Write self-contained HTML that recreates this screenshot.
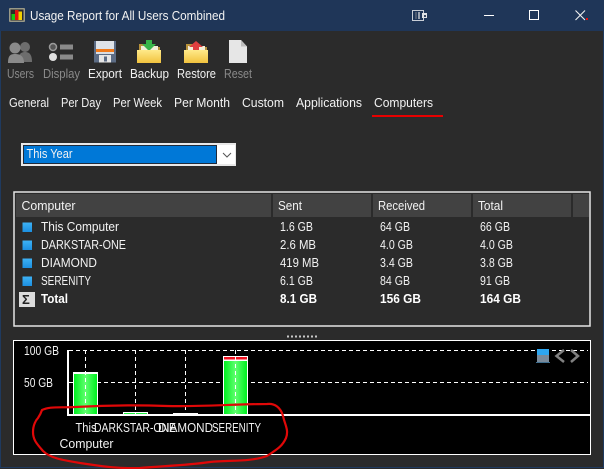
<!DOCTYPE html>
<html>
<head>
<meta charset="utf-8">
<style>
html,body{margin:0;padding:0;background:#2b2b2b;width:604px;height:469px;overflow:hidden}
svg{display:block}
text{font-family:"Liberation Sans",sans-serif;font-size:13px;fill:#f2f2f2}
.g{fill:#8a8a8a}
.b{font-weight:bold;fill:#fff}
</style>
</head>
<body>
<svg width="604" height="469" viewBox="0 0 604 469" xmlns="http://www.w3.org/2000/svg">
<defs>
<linearGradient id="gr" x1="0" x2="1" y1="0" y2="0">
<stop offset="0" stop-color="#00f020"/><stop offset=".5" stop-color="#60ff70"/><stop offset="1" stop-color="#00f020"/>
</linearGradient>
<linearGradient id="fo" x1="0" x2="0" y1="0" y2="1">
<stop offset="0" stop-color="#ffe98a"/><stop offset="1" stop-color="#f2c23e"/>
</linearGradient>
<linearGradient id="bl" x1="0" x2="0" y1="0" y2="1">
<stop offset="0" stop-color="#3db2f5"/><stop offset="1" stop-color="#1c8fe0"/>
</linearGradient>
</defs>

<!-- window -->
<rect width="604" height="469" fill="#2b2b2b"/>
<rect x="0" y="0" width="1" height="468" fill="#1f3a5f"/>
<rect x="603" y="0" width="1" height="468" fill="#1f3a5f"/>
<rect x="0" y="467" width="604" height="1" fill="#1f3a5f"/>
<rect x="0" y="0" width="604" height="31" fill="#1f3658"/>

<!-- app icon -->
<rect x="9" y="8" width="16" height="14" rx="1" fill="#9a9a88"/>
<rect x="10.500" y="9.500" width="13" height="11" fill="#2a2a2a"/>
<rect x="11.500" y="14" width="3.500" height="6" fill="#14c814"/>
<rect x="15" y="10" width="3.500" height="10" fill="#e01010"/>
<rect x="18.500" y="11.500" width="3.500" height="8.500" fill="#f0d000"/>
<text x="30" y="20" textLength="195" lengthAdjust="spacingAndGlyphs">Usage Report for All Users Combined</text>

<!-- caption buttons -->
<rect x="412.500" y="10.500" width="11" height="10" fill="none" stroke="#c9ced6"/>
<rect x="418" y="12" width="2" height="7" fill="#9aa3b0"/>
<rect x="415" y="12" width="2" height="7" fill="#4d5b70"/>
<rect x="422" y="13" width="5" height="5" fill="#dfe2e6"/>
<rect x="424" y="15" width="2" height="2" fill="#39475e"/>
<rect x="484" y="15" width="10" height="1" fill="#fff"/>
<rect x="529.500" y="10.500" width="9" height="9" fill="none" stroke="#fff"/>
<path d="M575.500 10.500 L585 20 M585 10.500 L575.500 20" stroke="#f0f0f0" stroke-width="1.100" fill="none"/>
<rect x="586" y="18" width="2" height="2" fill="#e01010"/>

<!-- Users icon -->
<circle cx="25" cy="47" r="5" fill="#6d6d6d"/>
<path d="M18 62 C18 54 21 52 25 52 C29 52 32 54 32 62 Z" fill="#6d6d6d"/>
<circle cx="15" cy="48" r="5.500" fill="#8a8a8a"/>
<path d="M8 63 C8 56 10 54 15 54 C20 54 24 56 24 63 Z" fill="#8a8a8a"/>

<!-- Display icon -->
<circle cx="53" cy="47" r="3.500" fill="#555" stroke="#9a9a9a" stroke-width="1.500"/>
<circle cx="53" cy="57" r="4" fill="#e0e0e0"/>
<rect x="60" y="44.500" width="13" height="5" fill="#8a8a8a"/>
<rect x="60" y="54.500" width="13" height="5" fill="#8a8a8a"/>

<!-- Export icon -->
<path d="M94 41 H116 V62.500 H94 Z" fill="#5c6c85"/>
<rect x="96" y="41" width="18" height="8" fill="#dfe3e8"/>
<rect x="96" y="49" width="18" height="3" fill="#f07a1a"/>
<rect x="96" y="52" width="18" height="2" fill="#d9dde2"/>
<rect x="99" y="55" width="12" height="7.500" fill="#e6e6e6"/>
<rect x="104" y="56.500" width="3" height="5" fill="#5c6c85"/>

<!-- Backup icon -->
<path d="M139 44 H146 V47 H160 V52 H139 Z" fill="#b8923a"/>
<rect x="141" y="46" width="17" height="6" fill="#f3efd8"/>
<path d="M146 40 H152 V44 H156 L149 51 L142 44 H146 Z" fill="#39b54a"/>
<path d="M137 50 H161 V63 H137 Z" fill="url(#fo)"/>

<!-- Restore icon -->
<path d="M186 44 H193 V47 H207 V52 H186 Z" fill="#b8923a"/>
<rect x="188" y="46" width="17" height="6" fill="#f3efd8"/>
<path d="M196 41 L203 47 H199 V51 H193 V47 H189 Z" fill="#e04040"/>
<path d="M184 50 H208 V63 H184 Z" fill="url(#fo)"/>

<!-- Reset icon -->
<path d="M229 40 H241 L247 46.500 V63 H229 Z" fill="#e6e6e6"/>
<path d="M241 40 V46.500 H247 Z" fill="#bdbdbd"/>

<!-- Toolbar labels -->
<text class="g" x="7" y="78" textLength="27" lengthAdjust="spacingAndGlyphs">Users</text>
<text class="g" x="43" y="78" textLength="37" lengthAdjust="spacingAndGlyphs">Display</text>
<text x="88" y="78" textLength="34" lengthAdjust="spacingAndGlyphs">Export</text>
<text x="130" y="78" textLength="39" lengthAdjust="spacingAndGlyphs">Backup</text>
<text x="177" y="78" textLength="39" lengthAdjust="spacingAndGlyphs">Restore</text>
<text class="g" x="224" y="78" textLength="28" lengthAdjust="spacingAndGlyphs">Reset</text>

<!-- Tabs -->
<text x="9" y="107" textLength="40" lengthAdjust="spacingAndGlyphs">General</text>
<text x="61" y="107" textLength="40" lengthAdjust="spacingAndGlyphs">Per Day</text>
<text x="113" y="107" textLength="49" lengthAdjust="spacingAndGlyphs">Per Week</text>
<text x="174" y="107" textLength="56" lengthAdjust="spacingAndGlyphs">Per Month</text>
<text x="242" y="107" textLength="42" lengthAdjust="spacingAndGlyphs">Custom</text>
<text x="296" y="107" textLength="66" lengthAdjust="spacingAndGlyphs">Applications</text>
<text x="374" y="107" textLength="59" lengthAdjust="spacingAndGlyphs">Computers</text>
<rect x="372" y="115" width="71" height="2" fill="#e80000"/>

<!-- Combo -->
<rect x="21" y="143" width="215" height="23" fill="#e8e8e8"/>
<rect x="23" y="145" width="194" height="19" fill="#1f2a3a"/>
<rect x="24" y="146" width="192" height="17" fill="#0078d7"/>
<rect x="217" y="145" width="18" height="19" fill="#fff"/>
<path d="M223 153 L227 157 L231 153" stroke="#555" stroke-width="1" fill="none"/>
<text x="26.500" y="158" textLength="46" lengthAdjust="spacingAndGlyphs">This Year</text>

<!-- Table -->
<rect x="14" y="192" width="576" height="134" fill="#2b2b2b" stroke="#e4e4e4" stroke-width="1.500"/>
<rect x="16" y="194" width="255" height="23" fill="#424242"/>
<rect x="273" y="194" width="98" height="23" fill="#424242"/>
<rect x="373" y="194" width="98" height="23" fill="#424242"/>
<rect x="473" y="194" width="98" height="23" fill="#424242"/>
<rect x="573" y="194" width="16" height="23" fill="#424242"/>
<text x="21.500" y="210" textLength="54" lengthAdjust="spacingAndGlyphs">Computer</text>
<text x="278" y="210" textLength="24" lengthAdjust="spacingAndGlyphs">Sent</text>
<text x="378" y="210" textLength="47" lengthAdjust="spacingAndGlyphs">Received</text>
<text x="478" y="210" textLength="25" lengthAdjust="spacingAndGlyphs">Total</text>

<rect x="22.500" y="222.500" width="9.500" height="9.500" fill="url(#bl)"/>
<rect x="22.500" y="240.500" width="9.500" height="9.500" fill="url(#bl)"/>
<rect x="22.500" y="258.500" width="9.500" height="9.500" fill="url(#bl)"/>
<rect x="22.500" y="276.500" width="9.500" height="9.500" fill="url(#bl)"/>
<rect x="19" y="292" width="16" height="15" fill="#dcdcdc"/>
<text x="22" y="304" style="font-size:13px;font-weight:bold;fill:#222">Σ</text>

<text x="41" y="231" textLength="78" lengthAdjust="spacingAndGlyphs">This Computer</text>
<text x="41" y="249" textLength="85" lengthAdjust="spacingAndGlyphs">DARKSTAR-ONE</text>
<text x="41" y="267" textLength="56" lengthAdjust="spacingAndGlyphs">DIAMOND</text>
<text x="41" y="285" textLength="50" lengthAdjust="spacingAndGlyphs">SERENITY</text>
<text class="b" x="41" y="303" textLength="27" lengthAdjust="spacingAndGlyphs">Total</text>

<text x="280" y="231" textLength="33" lengthAdjust="spacingAndGlyphs">1.6 GB</text>
<text x="280" y="249" textLength="36" lengthAdjust="spacingAndGlyphs">2.6 MB</text>
<text x="280" y="267" textLength="39" lengthAdjust="spacingAndGlyphs">419 MB</text>
<text x="280" y="285" textLength="33" lengthAdjust="spacingAndGlyphs">6.1 GB</text>
<text class="b" x="280" y="303" textLength="37" lengthAdjust="spacingAndGlyphs">8.1 GB</text>

<text x="380" y="231" textLength="30" lengthAdjust="spacingAndGlyphs">64 GB</text>
<text x="380" y="249" textLength="33" lengthAdjust="spacingAndGlyphs">4.0 GB</text>
<text x="380" y="267" textLength="33" lengthAdjust="spacingAndGlyphs">3.4 GB</text>
<text x="380" y="285" textLength="30" lengthAdjust="spacingAndGlyphs">84 GB</text>
<text class="b" x="380" y="303" textLength="41" lengthAdjust="spacingAndGlyphs">156 GB</text>

<text x="480" y="231" textLength="30" lengthAdjust="spacingAndGlyphs">66 GB</text>
<text x="480" y="249" textLength="33" lengthAdjust="spacingAndGlyphs">4.0 GB</text>
<text x="480" y="267" textLength="33" lengthAdjust="spacingAndGlyphs">3.8 GB</text>
<text x="480" y="285" textLength="30" lengthAdjust="spacingAndGlyphs">91 GB</text>
<text class="b" x="480" y="303" textLength="41" lengthAdjust="spacingAndGlyphs">164 GB</text>

<!-- Splitter -->
<path d="M287 336.500 H317" stroke="#c8c8c8" stroke-width="2" stroke-dasharray="2 2" fill="none"/>

<!-- Chart -->
<rect x="13.500" y="340.500" width="577" height="114" fill="#000" stroke="#fff" stroke-width="1"/>
<path d="M69 350.500 H588" stroke="#fff" stroke-width="1" stroke-dasharray="4 3" fill="none"/>
<path d="M69 382.500 H588" stroke="#fff" stroke-width="1" stroke-dasharray="4 3" fill="none"/>

<!-- bars -->
<rect x="73" y="372" width="25" height="43" fill="#fff"/>
<rect x="74" y="374" width="23" height="41" fill="url(#gr)"/>
<rect x="123" y="412" width="25" height="3" fill="#fff"/>
<rect x="124" y="413" width="23" height="2" fill="#20f040"/>
<rect x="173" y="413" width="25" height="2" fill="#fff"/>
<rect x="223" y="356" width="25" height="59" fill="#fff"/>
<rect x="224" y="357" width="23" height="2.500" fill="#f01020"/>
<rect x="224" y="361" width="23" height="54" fill="url(#gr)"/>

<path d="M85.500 350 V414 M135.500 350 V414 M185.500 350 V414 M235.500 350 V414" stroke="#fff" stroke-width="1" stroke-dasharray="4 3" fill="none"/>

<rect x="67" y="350" width="2" height="66" fill="#fff"/>
<rect x="67" y="414" width="523" height="2" fill="#fff"/>

<text x="24" y="355" textLength="35" lengthAdjust="spacingAndGlyphs">100 GB</text>
<text x="24" y="387" textLength="29" lengthAdjust="spacingAndGlyphs">50 GB</text>

<text x="75.500" y="432" textLength="21" lengthAdjust="spacingAndGlyphs">This</text>
<text x="94" y="432" textLength="82" lengthAdjust="spacingAndGlyphs">DARKSTAR-ONE</text>
<text x="158" y="432" textLength="55" lengthAdjust="spacingAndGlyphs">DIAMOND</text>
<text x="212" y="432" textLength="49" lengthAdjust="spacingAndGlyphs">SERENITY</text>
<text x="59.500" y="448" textLength="54" lengthAdjust="spacingAndGlyphs">Computer</text>

<!-- legend + arrows -->
<rect x="537" y="349" width="12" height="14" fill="#7a8a9a"/>
<rect x="537" y="349" width="12" height="6" fill="#2ea6f0"/>
<rect x="536" y="362" width="14" height="1" fill="#3f6f90"/>
<path d="M564 350 L556.500 356 L564 362" stroke="#808080" stroke-width="2.500" fill="none"/>
<path d="M571 350 L578 356 L571 362" stroke="#808080" stroke-width="2.500" fill="none"/>

<!-- hand-drawn red ellipse -->
<path d="M42 410 C50 406 60 408 75 407 C110 405 140 405 167 406 C200 407 235 404 267 404 C275 403 281 408 283 416 C285 425 289 430 286 438 C282 447 276 450 267 456 C250 462 230 460 210 462 C190 465 165 466 140 468 C115 469 95 465 80 463 C62 460 50 458 43 451 C37 444 33 440 33 432 C33 425 36 420 38 418 C40 415 41 413 42 410 Z" fill="none" stroke="#e00808" stroke-width="2.200"/>
</svg>
</body>
</html>
